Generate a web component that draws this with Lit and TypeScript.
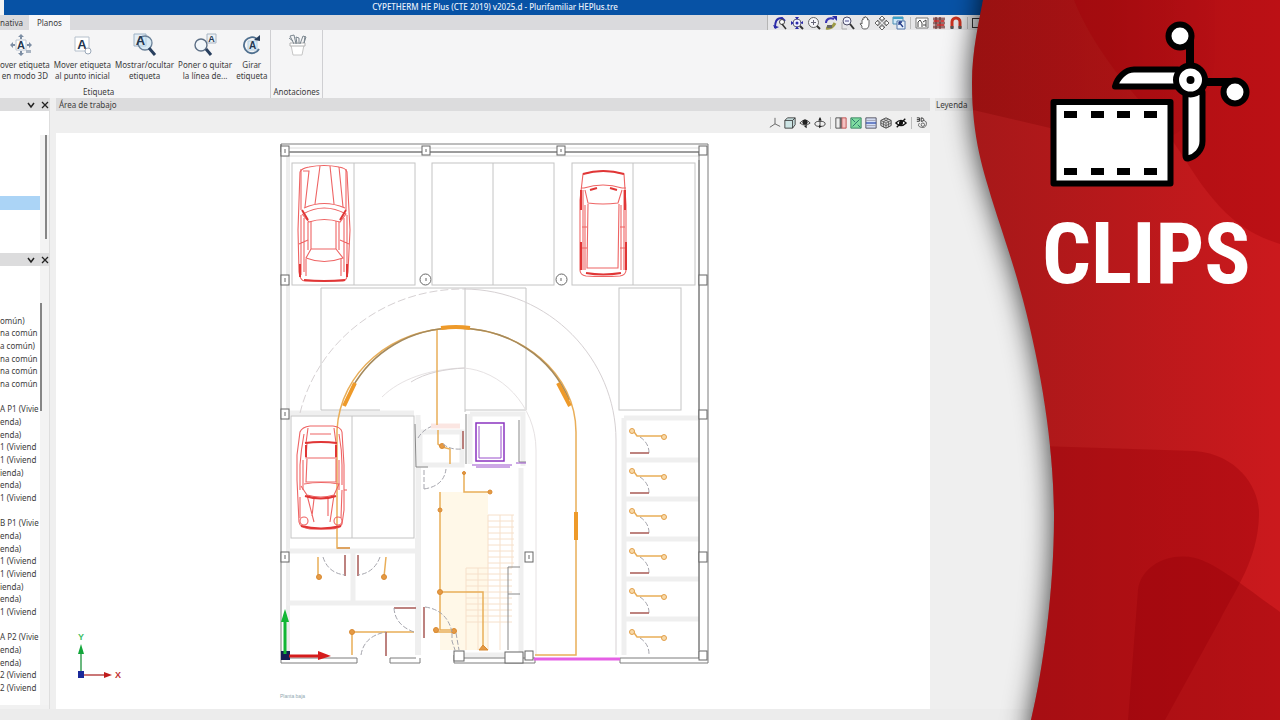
import { LitElement, html, svg, css } from "lit";
import { customElement } from "lit/decorators.js";

/* ---------- toolbar glyphs, 14 x 14 grid ---------- */
const viewTools = [
  { name: "Vista anterior", art: svg`<path d="M2 12C2 6 3 2 9 2L12 5" fill="none" stroke="#2b2ba8" stroke-width="2"/><path d="M0 9l2 4 4-2z" fill="#2b2ba8"/><circle cx="9" cy="6" r="2.500" fill="#fff" stroke="#444"/><path d="M9 8l4 5" stroke="#333" stroke-width="1.500"/>` },
  { name: "Ver todo", art: svg`<circle cx="7" cy="7" r="4" fill="#eef" stroke="#667" /><path d="M5 1h4L7 4zM1 5v4l3-2zM13 5v3l-3-1zM5 13h4l-2-3z" fill="#2b2ba8"/><circle cx="7" cy="7" r="1.500" fill="#2b2ba8"/><path d="M10 10l3 3" stroke="#333" stroke-width="2"/>` },
  { name: "Zoom doble", art: svg`<circle cx="6.500" cy="6.500" r="5" fill="#f6f6fa" stroke="#666"/><path d="M4 6.500h5M6.500 4v5" stroke="#667"/><path d="M10 10l3 3" stroke="#333" stroke-width="2"/>` },
  { name: "Redibujar", art: svg`<path d="M2 7C2 3 6 1 10 3" fill="none" stroke="#3a35b5" stroke-width="2"/><path d="M8 0h5v5z" fill="#2b2ba8"/><path d="M2 12Q8 13 11 7" fill="none" stroke="#9c9a45" stroke-width="3"/><path d="M3 9h5v3H3z" fill="#666"/>` },
  { name: "Zoom ventana", art: svg`<path d="M1 13V6M1 13h5" stroke="#aaa"/><circle cx="6" cy="5" r="4" fill="#f2f4ff" stroke="#4c4c66"/><path d="M4 5h4" stroke="#4c4c88"/><path d="M9 8l4 5" stroke="#333" stroke-width="2"/>` },
  { name: "Mover", art: svg`<path d="M4 8V4q1-1 1 0V2q1-1 1.500 0V1q1-1 1.500 0v1q1-1 1.500 0v2q1-1 1.500 0v4q0 5-4 5T4 10L2 8q0-1.500 2 0z" fill="#fff" stroke="#555" stroke-width=".9"/>` },
  { name: "Encuadre", art: svg`<path d="M7 0l3 3H8v2h-2V3H4zM7 14l3-3H8V9H6v2H4zM0 7l3-3v2h2v2H3v2zM14 7l-3-3v2H9v2h2v2z" fill="#fff" stroke="#555" stroke-width=".9"/>` },
  { name: "Copiar vista", art: svg`<path d="M1 1h10v7H1z" fill="#cfe8f8" stroke="#4c8fb5"/><path d="M1 1h10v2H1z" fill="#3aa0c8"/><path d="M5 5h8v8H5z" fill="#e9f2fb" stroke="#5577aa"/><path d="M7 6l4 5M7 6v3M7 6h3" stroke="#223a88" stroke-width="1.300"/>` },
];
const draftTools = [
  { name: "Plantillas", art: svg`<path d="M1 2h12v10H1z" fill="#fff" stroke="#777"/><path d="M3 11V6l2-2 2 3v4M8 9h3M8 6l3-2v7" fill="none" stroke="#444"/>` },
  { name: "Capas", art: svg`<path d="M1 1h12v12H1z" fill="#c9a9a9"/><path d="M1 3h12M1 7h12M1 11h12M4 1v12M8 1v12" stroke="#633" stroke-width="1.200"/><path d="M2 5h5M9 5h3M5 9h7" stroke="#c22" stroke-width="1.500"/>` },
  { name: "Referencias", art: svg`<path d="M3 12V6a4 4 0 0 1 8 0v6" fill="none" stroke="#c8311f" stroke-width="3"/><path d="M1.500 10h3v3h-3zM9.500 10h3v3h-3z" fill="#555"/>` },
];
const axisTools = [
  { name: "Ejes", art: svg`<path d="M7 1v7M7 8l-6 4M7 8l6 3" fill="none" stroke="#555"/>` },
  { name: "Cubo", art: svg`<path d="M1 4l3-3h9v8l-3 4H1z" fill="#cde4e4" stroke="#333"/><path d="M1 4h9v9M10 4l3-3" fill="none" stroke="#333"/>` },
  { name: "Orbitar", art: svg`<path d="M1 7q6-7 12 0M1 7q6 5 12 0" fill="none" stroke="#333"/><circle cx="7" cy="6" r="3" fill="#222"/><path d="M6 11l3-2v4z" fill="#222"/>` },
  { name: "Girar", art: svg`<ellipse cx="7" cy="8" rx="6" ry="3" fill="none" stroke="#333"/><path d="M7 1v9" stroke="#333"/><path d="M5 4l2-4 2 4zM6 13l3-2-3-2z" fill="#222"/>` },
];
const clipTools = [
  { name: "Corte vertical", art: svg`<path d="M1 1h5v12H1z" fill="#eee" stroke="#444"/><path d="M8 1h5v12H8z" fill="#f3c1c1" stroke="#b44"/><path d="M7 0v14" stroke="#333"/>` },
  { name: "Corte libre", art: svg`<path d="M1 1h12v12H1z" fill="#7fdca0" stroke="#2b7a55"/><path d="M3 11l8-8M2 2l4 4M9 9l3 3" stroke="#266"/>` },
  { name: "Corte horizontal", art: svg`<path d="M1 1h12v12H1z" fill="#d7e0f5" stroke="#445"/><path d="M1 7h12" stroke="#2f4fae" stroke-width="1.500"/><path d="M1 4h12M1 10h12" stroke="#99a"/>` },
  { name: "Malla", art: svg`<path d="M7 1l6 3v6l-6 3-6-3V4z" fill="#ddd" stroke="#333"/><path d="M1 4l6 3 6-3M7 7v6M4 2.500l6 3V12M10 2.500l-6 3V12M1 7l6 3 6-3" fill="none" stroke="#444" stroke-width=".8"/>` },
  { name: "Ocultar", art: svg`<path d="M1 7q6-6 12 0-6 6-12 0z" fill="#fff" stroke="#111" stroke-width="1.500"/><circle cx="7" cy="7" r="2.500" fill="#111"/><path d="M2 12L12 2" stroke="#111" stroke-width="1.500"/>` },
];
const turnTool = { name: "Vista 3D", art: svg`<path d="M1 1h3v4H1M1 3h3M6 1v4h1q2 0 2-2T6 1" fill="none" stroke="#222"/><path d="M9 4q4 1 3 5t-6 3-2-5" fill="none" stroke="#555"/><circle cx="8" cy="9" r="2" fill="none" stroke="#555"/>` };

/* ---------- ribbon glyphs, 24 x 24 grid ---------- */
const A = (x: number, y: number, s: number) =>
  svg`<text x=${x} y=${y} font-size=${s} class="glyph">A</text>`;
const ribbon = [
  { lines: ["over etiqueta", "en modo 3D"], art: svg`<path d="M7 7h10v10H7z" fill="#fff" stroke="#bcc6d2"/>${A(12, 16, 11)}<path d="M12 1l3 3h-2v2h-2V4H9zM12 23l3-3h-2v-2h-2v2H9zM1 12l3-3v2h2v2H4v2zM23 12l-3-3v2h-2v2h2v2z" fill="#7d8ea4"/><path d="M17 17h5v3h-5z" fill="#a9b4c2"/>` },
  { lines: ["Mover etiqueta", "al punto inicial"], art: svg`<path d="M5 4h14v14H5z" fill="#fff" stroke="#b5c0cc"/>${A(12, 16, 13)}<circle cx="18" cy="18" r="3" fill="#fff" stroke="#9aa7b8"/>` },
  { lines: ["Mostrar/ocultar", "etiqueta"], art: svg`<path d="M1 1h12v12H1z" fill="#e4eef6" stroke="#9db2c6"/><circle cx="12" cy="10" r="7" fill="#c4e3f3" fill-opacity=".6" stroke="#6a8098" stroke-width="1.300"/>${A(7.5, 12, 13)}<path d="M16 15l6 7" stroke="#283f5e" stroke-width="3"/>` },
  { lines: ["Poner o quitar", "la línea de..."], art: svg`<path d="M14 1h9v9h-9z" fill="#edf1f5" stroke="#a9b6c4"/>${A(18.5, 9, 9)}<circle cx="8" cy="12" r="6" fill="#f2f6fa" stroke="#5c6f86" stroke-width="1.400"/><path d="M13 16l5 6" stroke="#283f5e" stroke-width="3"/>` },
  { lines: ["Girar", "etiqueta"], art: svg`<path d="M8 8h9v9H8z" fill="#d9ebf7" stroke="#b7cfe0"/>${A(12.5, 16, 10)}<path d="M19 16A8 8 0 1 1 17 6" fill="none" stroke="#50708f" stroke-width="1.800"/><path d="M14 7l6-5v6z" fill="#283f5e"/>` },
];
const potIcon = svg`<path d="M6 12h13l-2 10H8z" fill="#fff" stroke="#c6c6c6"/><path d="M5 10h15v3H5z" fill="#fff" stroke="#b3b3b3"/><path d="M9 11L5 3l4-1 2 9M12 11l-1-7 3 1v6M15 11l3-8 3 1-2 6M4 5l4 3M20 3l-1 7" fill="none" stroke="#7c8790"/>`;

/* ---------- tree of rooms ---------- */
const rooms = [
  "omún)", "na común", "a común)", "na común", "na común", "na común", "",
  "A P1 (Vivie", "enda)", "enda)", "1 (Viviend", "1 (Viviend", "ienda)", "enda)", "1 (Viviend", "",
  "B P1 (Vivie", "enda)", "enda)", "1 (Viviend", "1 (Viviend", "ienda)", "enda)", "1 (Viviend", "",
  "A P2 (Vivie", "enda)", "enda)", "2 (Viviend", "2 (Viviend",
];

/* ---------- floor plan ---------- */
const box = (x: number, y: number, w: number, h: number) => svg`<rect x=${x} y=${y} width=${w} height=${h}/>`;
const walls = svg`
  <g class="soft">
    <path d="M287 153V655M289 153V655M283 156H700M283 148H705" />
    <path d="M420 420V655M416 538V655" />
  </g>
  <g class="band">
    <path d="M287 551H418M353 551V603M287 603H418M287 413H414M418 655V415" />
    <path d="M470 414H523V466M470 414V464M624 418V655M624 418H698" />
    <path d="M626 460H699M626 499H699M626 539H699M626 579H699M626 619H699" />
    <path d="M521 468V655M420 432H462V465H420zM455 655H530" />
  </g>
  <g class="outer">
    <path d="M281 663V144H708V663H620V658H699V152H290M281 152V144" />
    <path d="M281 663H357V658H290M390 658V663H420V658M454 655V663H535V658H458M390 658H416" />
    <path d="M284 152H700M699 160V650" />
  </g>
  <g class="col">
    ${box(281, 146, 8, 10)}${box(422, 146, 8, 9)}${box(557, 146, 8, 9)}${box(699, 146, 8, 9)}
    ${box(281, 275, 8, 10)}${box(281, 409, 8, 10)}${box(281, 552, 8, 10)}${box(525, 552, 8, 10)}
    ${box(699, 275, 8, 10)}${box(699, 410, 8, 9)}${box(699, 552, 8, 10)}${box(699, 651, 8, 9)}
    ${box(454, 651, 10, 10)}${box(505, 652, 18, 11)}${box(525, 651, 8, 9)}
    <circle cx="425.500" cy="279.500" r="5.500"/><circle cx="561.500" cy="279.500" r="5.500"/><circle cx="458.500" cy="557" r="5.500"/>
    <path d="M285 149v4M426 149v3M561 149v3M285 278v4M285 412v4M285 555v4M426 278v3M561 278v3M458 556v3M529 555v4"/>
  </g>
  <g class="bay">
    ${box(292, 163, 123, 122)}${box(432, 163, 122, 122)}${box(572, 163, 123, 122)}
    <path d="M354 163V285M493 163V285M633 163V285M352 416V538M465 288V412M380 410H321V288H526V410H465"/>
    ${box(619, 288, 62, 122)}${box(291, 416, 123, 122)}
  </g>`;

const ramps = svg`
  <path class="ramp" d="M300 413C318 340 385 289 463 289" stroke-dasharray="8 3"/>
  <path class="ramp" d="M463 289C550 289 616 360 616 440V655"/>
  <path class="ramp pale" d="M382 397C400 379 430 369 463 368C500 370 536 405 536 450V655"/>
  <path class="ramp" d="M411 382C425 373 445 369 465 368"/>
  <path class="cable" d="M337 538V430C340 372 392 328 456 328C522 328 576 374 576 432V655H535M337 538V548H350"/>
  <path class="cable dark" d="M352 388C372 352 410 328 456 328C510 328 552 358 569 400"/>
  <path class="lamp" d="M441 328Q456 326 470 328M344 406L355 383M558 383L570 406M576 512V540"/>
  <path class="cable" d="M437 330V425"/>
  <path class="magenta" d="M534 659H620"/>`;

const rooms2d = svg`
  <rect x="440" y="492" width="48" height="158" fill="#fff8e8"/>
  <g class="steps"><path d="M488 515V568M500 515V650M512 515V568M466 568V650M478 568V650M488 568V650"/>
    ${[515, 521, 527, 533, 539, 545, 551, 557, 563].map((y) => svg`<path d=${`M488 ${y}H514`}/>`)}
    ${[568, 574, 580, 586, 592, 598, 604, 610, 616, 622].map((y) => svg`<path d=${`M466 ${y}H512`}/>`)}
  </g>
  <path class="thin" d="M508 650V567H520M508 594H520M519 420V462H526M466 414V464M415 424L416 467H428"/>
  <rect x="476" y="423" width="28" height="38" fill="#fff" stroke="#8b35c0" stroke-width="1.500"/>
  <path d="M479 426V458H501V426M472 465H512M476 467H510M516 463H526" fill="none" stroke="#9a50cc"/>
  <path class="cable" d="M464 472V492H490M440 492V630H456M440 592H483V650M438 430V444L442 447L450 449V464M352 655V632H414M318 557V577M386 557L384 577M434 632H456"/>
  <g class="bulb">
    <circle cx="490" cy="492" r="2"/><circle cx="440" cy="510" r="2"/><circle cx="440" cy="592" r="2.500"/><circle cx="464" cy="473" r="1.500"/>
    <circle cx="319" cy="577" r="2.500"/><circle cx="384" cy="577" r="2.500"/><circle cx="352" cy="632" r="2.500"/><circle cx="442" cy="446" r="2.500"/>
    <circle cx="436" cy="630" r="2.500"/><circle cx="454" cy="631" r="2.500"/><path d="M479 650l4-5 5 5z"/>
  </g>
  <path class="leaf" d="M345 555V576M358 555V576M394 608H416M424 607V638M386 632V656M463 431V449M337 548H350"/>
  <path class="swing" d="M323 557Q328 573 345 575M380 557Q374 573 358 575M394 608Q395 625 414 632M425 607Q447 610 452 632M361 655Q364 636 386 632M424 489V469M424 489Q444 486 446 469M443 444Q450 450 462 449M418 438Q424 428 436 425M452 633V641L455 650M456 633L459 650"/>
  <path class="blush" d="M431 426H460"/>
  ${[437, 477, 517, 557, 597, 638].map(
    (y) => svg`<g class="unit">
      <path class="cable" d=${`M632 ${y - 8}L637 ${y - 1}H664`}/>
      <circle class="ring" cx="664" cy=${y} r="2.500"/><circle class="ring" cx="632" cy=${y - 6} r="2.500"/>
      <path class="swing" d=${`M640 ${y}Q649 ${y + 6} 649 ${y + 16}`}/>
      ${y < 630 ? svg`<path class="leaf" d=${`M630 ${y + 16}H649`}/>` : ""}
    </g>`
  )}`;

const cars = svg`
  <g class="car">
    <path d="M300 172Q302 168 309 167Q324 164 339 167Q346 168 347 172L350 230L348 272Q347 281 343 281H305Q300 281 299 272L298 230Z"/>
    <path d="M303 171H309L305 207M320 166L315 204M330 166L334 204M339 167L343 207M301 169V210M346 169V210"/>
    <path d="M304 208Q324 199 345 208M303 214Q324 202 346 214L340 222Q324 217 309 222L302 214"/>
    <path d="M311 221V249H336V221M311 249L306 258Q324 265 343 258L336 249M308 222V250M339 222V250"/>
    <path d="M301 215V275M304 218V272M344 218V272M347 215V275M299 244L308 240M349 244L340 240M306 259V276M341 259V276"/>
    <path class="heavy" d="M304 280Q324 282 345 280M300 264V277M347 264V277M302 210L308 220M346 210L340 220"/>
  </g>
  <g class="car">
    <path d="M583 174Q603 168 624 174L626 205V270Q626 275 620 276Q603 277 586 276Q580 275 580 270V200Z"/>
    <path d="M584 188Q603 182 622 188M585 190L588 203Q603 205 618 203L622 190M581 188H585M622 188H626"/>
    <path d="M588 204L587 268H618L619 204M583 190V270M585 205V270M621 205V270M624 190V270M582 227H587M620 227H625M582 248H587M620 248H625"/>
    <path class="heavy" d="M583 174Q603 168 624 174M581 190V210M625 190V210M581 242V270M626 242V270M586 273Q603 276 621 273M590 190L597 188M610 188L617 190"/>
  </g>
  <g class="car">
    <path d="M300 432Q302 427 310 426H333Q341 427 342 432L344 465V510L342 524Q340 529 330 529H310Q300 528 299 522L297 480V455Z"/>
    <path d="M308 428L306 443Q321 441 336 443L334 428M304 434Q301 450 300 465M339 434Q342 450 342 465M310 434H331"/>
    <path d="M307 443L306 458H336V443M307 459L306 482H336V459M303 460V490M339 460V490M300 465V490M342 465V485"/>
    <path d="M304 484Q321 481 339 484L334 495Q321 499 307 495L301 486M314 499L312 516M328 499V516M307 495L314 522M334 495L330 522M300 497V518M342 490L341 518"/>
    <path class="heavy" d="M305 443Q321 441 337 443M301 526Q321 531 341 526M306 445V457M336 445V457M305 496Q321 501 336 496"/>
    <circle cx="304" cy="521" r="4"/><circle cx="338" cy="521" r="4"/><path d="M344 490h3"/>
  </g>`;

const axes = svg`
  <g><rect x="281" y="651" width="9" height="9" fill="#151b52"/>
    <path d="M285 654V622" stroke="#12b634" stroke-width="3"/><path d="M281 622L285 609L289 622Z" fill="#12b634"/>
    <path d="M289 656H318" stroke="#d51c1c" stroke-width="3"/><path d="M318 651L331 656L318 660Z" fill="#d51c1c"/></g>
  <g><rect x="78" y="671" width="6" height="7" fill="#1b2a9a"/>
    <path d="M81 671V653" stroke="#3aa055" stroke-width="1.500"/><path d="M78 654L81 644L84 654Z" fill="#12a63a"/>
    <path d="M84 675H104" stroke="#b84a4a" stroke-width="1.500"/><path d="M104 672L112 675L104 678Z" fill="#c01c1c"/>
    <text x="78" y="640" class="axis y">Y</text><text x="115" y="678" class="axis x">X</text></g>
  <text x="280" y="698" class="caption">Planta baja</text>`;

@customElement("app-root")
export class AppRoot extends LitElement {
  static styles = css`
    :host { display: block; font: 8px/11px "Noto Sans", "Open Sans", sans-serif; color: #3c3c3c; }
    * { box-sizing: border-box; }
    button { all: unset; box-sizing: border-box; cursor: pointer; display: block; }
    svg { display: block; }
    .app { position: relative; height: 100vh; overflow: hidden; display: flex; flex-direction: column; background: #efefef; }

    .title { height: 15px; flex: none; background: #0752a5; color: #e8f0fa; display: flex; align-items: center; }
    .title::before { content: ""; width: 4px; height: 15px; background: #f3f3f3; }
    .title h1 { margin: 0; flex: 1; padding: 0 294px 3px 0; text-align: center; font-size: 8px; line-height: 11px; font-weight: 500; }

    .tabs { height: 15px; flex: none; display: flex; align-items: stretch; background: #dadadd; }
    .tab { padding: 0 8px; line-height: 15px; }
    .tab.cut { padding: 0 6px 0 0; }
    .tab.on { background: #f6f6f8; }
    .tools { display: flex; align-items: center; }
    .quick { margin-left: auto; padding: 0 294px 0 5px; gap: 3px; background: #e6e6e8; border-left: 1px solid #b5b5b5; }
    .quick svg { width: 14px; height: 14px; }
    .sep { width: 1px; height: 12px; margin: 0 1px; background: #bdbdbd; }
    .frame { width: 14px; height: 10px; border: 1px solid #333; }

    .ribbon { height: 68px; flex: none; display: flex; background: #f5f5f6; }
    .group { display: flex; flex-direction: column; justify-content: space-between; border-right: 1px solid #cfcfd2; padding: 3px 3px 0 0; }
    .items { display: flex; gap: 4px; }
    .item { text-align: center; white-space: nowrap; }
    .item svg { width: 24px; height: 24px; margin: 0 auto 2px; }
    .item:first-child svg { margin-left: 9px; }
    .group h2 { margin: 0; font-size: 8px; line-height: 12px; font-weight: 400; text-align: center; }
    .group.labels h2 { padding-right: 70px; }
    .group.notes { padding-left: 2px; padding-right: 2px; }
    .group.notes .item svg { margin: 0 auto; }
    .glyph { font-family: "Liberation Sans", sans-serif; font-weight: 700; fill: #24364f; text-anchor: middle; }

    .main { flex: 1; min-height: 0; display: flex; }
    .side { width: 50px; display: flex; flex-direction: column; border-right: 1px solid #dedede; background: #f1f1f1; }
    .head { height: 13px; flex: none; display: flex; align-items: center; background: #dcdcdd; }
    .head h2 { margin: 0; font-size: 8px; line-height: 13px; font-weight: 400; }
    .side .head { justify-content: flex-end; gap: 6px; }
    .head svg { width: 8px; height: 8px; }
    .upper { height: 142px; flex: none; display: flex; background: #fff; padding-top: 24px; }
    .picks { flex: 1; padding-top: 61px; }
    .pick { height: 14px; width: 100%; background: #abd4f6; }
    .bar { width: 9px; background: #f3f3f3; }
    .bar::after { content: ""; display: block; margin-left: 5px; width: 2px; height: 104px; background: #858585; }
    .lower { flex: 1; min-height: 0; display: flex; background: #fff; }
    .lower .bar { padding-top: 37px; }
    .lower .bar::after { margin-left: 0; height: 108px; }
    .rooms { flex: 1; min-width: 0; margin: 0; padding: 48px 0 11px; list-style: none; display: grid; grid-template-rows: repeat(30, 1fr); white-space: nowrap; align-items: center; }
    .side .foot { height: 4px; background: #f1f1f1; }

    .work { flex: 1; min-width: 0; display: flex; flex-direction: column; padding-left: 6px; }
    .work .head h2 { padding-left: 3px; }
    .views { height: 22px; flex: none; justify-content: flex-end; gap: 3px; padding: 2px 2px 0; }
    .views svg { width: 12px; height: 12px; }
    .canvas { flex: 1; min-height: 0; background: #fff; }
    .canvas svg { width: 100%; height: 100%; }
    .legend { width: 350px; padding-left: 5px; }
    .legend .head { padding-left: 1px; background: #e6e6e6; }
    .status { height: 11px; flex: none; background: #ececec; }

    .soft { fill: none; stroke: #dcdcdc; }
    .band { fill: none; stroke: #efefef; stroke-width: 5; }
    .outer { fill: none; stroke: #7c7c7c; }
    .col { fill: #fff; stroke: #666; }
    .bay { fill: none; stroke: #c4c4c4; }
    .thin { fill: none; stroke: #888; }
    .ramp { fill: none; stroke: #d6d1d3; }
    .pale { stroke: #e6e2e3; }
    .cable { fill: none; stroke: #e9ae58; stroke-width: 1.5; }
    .dark { stroke: #a58a5c; }
    .lamp { fill: none; stroke: #ee9a2a; stroke-width: 4; }
    .magenta { stroke: #e560e5; stroke-width: 3; }
    .steps { fill: none; stroke: #f6e0ca; }
    .bulb { fill: #e59a44; stroke: #d98a32; }
    .ring { fill: #f7d9a8; stroke: #e3a04a; }
    .leaf { fill: none; stroke: #a85a55; stroke-width: 1.5; }
    .swing { fill: none; stroke: #a5a5ad; stroke-dasharray: 5 2; }
    .blush { stroke: #fbe6e2; stroke-width: 5; }
    .car { fill: none; stroke: #ee6464; stroke-width: 1.1; }
    .heavy { stroke: #e03636; stroke-width: 2; }
    .axis { font: 700 9px "Liberation Sans", sans-serif; }
    .axis.y { fill: #3fbf63; }
    .axis.x { fill: #c23232; }
    .caption { font: 5px "Liberation Sans", sans-serif; fill: #8fa8b0; }

    .banner { position: absolute; top: 0; right: 0; height: 100%; aspect-ratio: 308 / 720; display: flex; flex-direction: column; align-items: flex-start; padding: 20px 0 0 70px; }
    .backdrop { position: absolute; inset: 0; width: 100%; height: 100%; overflow: visible; }
    .clip { position: relative; width: 210px; height: 168px; }
    .banner strong { position: relative; margin-top: 14px; color: #fff; font: 700 86px/104px "Roboto Condensed", "Liberation Sans Narrow", Roboto, sans-serif; }
  `;

  private tool(t: { name: string; art: unknown }) {
    return html`<button aria-label=${t.name}><svg viewBox="0 0 14 14">${t.art}</svg></button>`;
  }

  private headButtons() {
    return html`<button aria-label="Plegar"><svg viewBox="0 0 8 8"><path d="M1 2l3 4 3-4" fill="none" stroke="#222" stroke-width="1.500"/></svg></button>
      <button aria-label="Cerrar"><svg viewBox="0 0 8 8"><path d="M1 1l6 6M7 1L1 7" stroke="#222" stroke-width="1.300"/></svg></button>`;
  }

  render() {
    return html`
      <div class="app">
        <header class="title"><h1>CYPETHERM HE Plus (CTE 2019) v2025.d - Plurifamiliar HEPlus.tre</h1></header>
        <nav class="tabs">
          <button class="tab cut">nativa</button>
          <button class="tab on">Planos</button>
          <div class="tools quick">
            ${viewTools.map((t) => this.tool(t))}<span class="sep"></span>
            ${draftTools.map((t) => this.tool(t))}<span class="sep"></span>
            <button class="frame" aria-label="Ventana"></button>
          </div>
        </nav>
        <section class="ribbon">
          <div class="group labels">
            <div class="items">
              ${ribbon.map((r) => html`<button class="item"><svg viewBox="0 0 24 24">${r.art}</svg>${r.lines[0]}<br />${r.lines[1]}</button>`)}
            </div>
            <h2>Etiqueta</h2>
          </div>
          <div class="group notes">
            <button class="item" aria-label="Anotaciones"><svg viewBox="0 0 24 24">${potIcon}</svg></button>
            <h2>Anotaciones</h2>
          </div>
        </section>
        <main class="main">
          <aside class="side">
            <div class="head">${this.headButtons()}</div>
            <div class="upper"><div class="picks"><button class="pick" aria-label="Planta"></button></div><div class="bar"></div></div>
            <div class="head">${this.headButtons()}</div>
            <div class="lower">
              <ul class="rooms">${rooms.map((r) => html`<li>${r}</li>`)}</ul>
              <div class="bar"></div>
            </div>
            <div class="foot"></div>
          </aside>
          <section class="work">
            <div class="head"><h2>Área de trabajo</h2></div>
            <div class="tools views">
              ${axisTools.map((t) => this.tool(t))}<span class="sep"></span>
              ${clipTools.map((t) => this.tool(t))}<span class="sep"></span>
              ${this.tool(turnTool)}
            </div>
            <div class="canvas">
              <svg viewBox="56 133 874 576">${walls}${rooms2d}${ramps}${cars}${axes}</svg>
            </div>
          </section>
          <aside class="legend"><div class="head"><h2>Leyenda</h2></div></aside>
        </main>
        <footer class="status"></footer>

        <section class="banner">
          <svg class="backdrop" viewBox="972 0 308 720" preserveAspectRatio="none">
            <defs>
              <linearGradient id="red" x1="0" x2="1" y1="0" y2="0"><stop offset="0" stop-color="#a51819"/><stop offset="1" stop-color="#cb191d"/></linearGradient>
              <linearGradient id="shade" x1="0" x2="1" y1="0" y2="0"><stop offset="0" stop-color="#7c0000" stop-opacity=".32"/><stop offset=".6" stop-color="#7c0000" stop-opacity=".26"/><stop offset="1" stop-color="#7c0000" stop-opacity=".04"/></linearGradient>
              <filter id="blur" x="-30%" y="-10%" width="160%" height="120%"><feGaussianBlur stdDeviation="14"/></filter>
              <clipPath id="edge"><path d="M983 0C979 22 972 50 972 83C972 140 984 172 993 203C1003 235 1013 262 1023 300C1042 372 1054 450 1054 518C1054 590 1043 670 1031 720H1280V0Z"/></clipPath>
              <clipPath id="page"><rect x="880" y="0" width="400" height="720"/></clipPath>
            </defs>
            <g clip-path="url(#page)">
              <path d="M983 -40V0C979 22 972 50 972 83C972 140 984 172 993 203C1003 235 1013 262 1023 300C1042 372 1054 450 1054 518C1054 590 1043 670 1031 720V760H1300V-40Z" fill="#000" fill-opacity=".8" filter="url(#blur)"/>
            </g>
            <g clip-path="url(#edge)">
              <path d="M960 0H1280V720H960Z" fill="url(#red)"/>
              <path d="M960 107L1050 128L1140 144Q1205 140 1215 60V0H960Z" fill="url(#shade)"/>
              <path d="M1074 0C1092 45 1125 85 1150 112C1180 146 1190 172 1214 200Q1240 232 1280 244V0Z" fill="#a00008" fill-opacity=".36"/>
              <path d="M1040 446L1195 451C1240 455 1260 490 1259 515C1258 560 1235 590 1220 620L1165 720H1020Z" fill="#9a0008" fill-opacity=".38"/>
              <path d="M1128 720L1138 590C1141 565 1170 552 1195 558C1215 563 1240 583 1280 612V720Z" fill="#920008" fill-opacity=".36"/>
            </g>
          </svg>
          <svg class="clip" viewBox="1042 20 210 168">
            <g fill="#fff" stroke="#000" stroke-width="6" stroke-linejoin="round">
              <path d="M1190 36V66M1205 82H1232" stroke-width="8"/>
              <circle cx="1180" cy="36" r="11.500"/><circle cx="1235" cy="92" r="11.500"/>
              <path d="M1115 86.500C1117 78 1125 69.500 1134 69.500H1178V86.500Z"/>
              <path d="M1185.500 92H1202.500V141C1202.500 150 1196 156.500 1188 158.500Q1185.500 159 1185.500 156Z"/>
              <circle cx="1190.500" cy="80" r="14.500"/>
              <path d="M1053.500 102H1170.500V183.500H1053.500Z"/>
            </g>
            <circle cx="1190.500" cy="80" r="4"/>
            <path d="M1064 111h13v7h-13zM1091 111h13v7h-13zM1117 111h13v7h-13zM1144 111h13v7h-13zM1064 168h13v7h-13zM1091 168h13v7h-13zM1117 168h13v7h-13zM1144 168h13v7h-13z"/>
          </svg>
          <strong>CLIPS</strong>
        </section>
      </div>
    `;
  }
}
